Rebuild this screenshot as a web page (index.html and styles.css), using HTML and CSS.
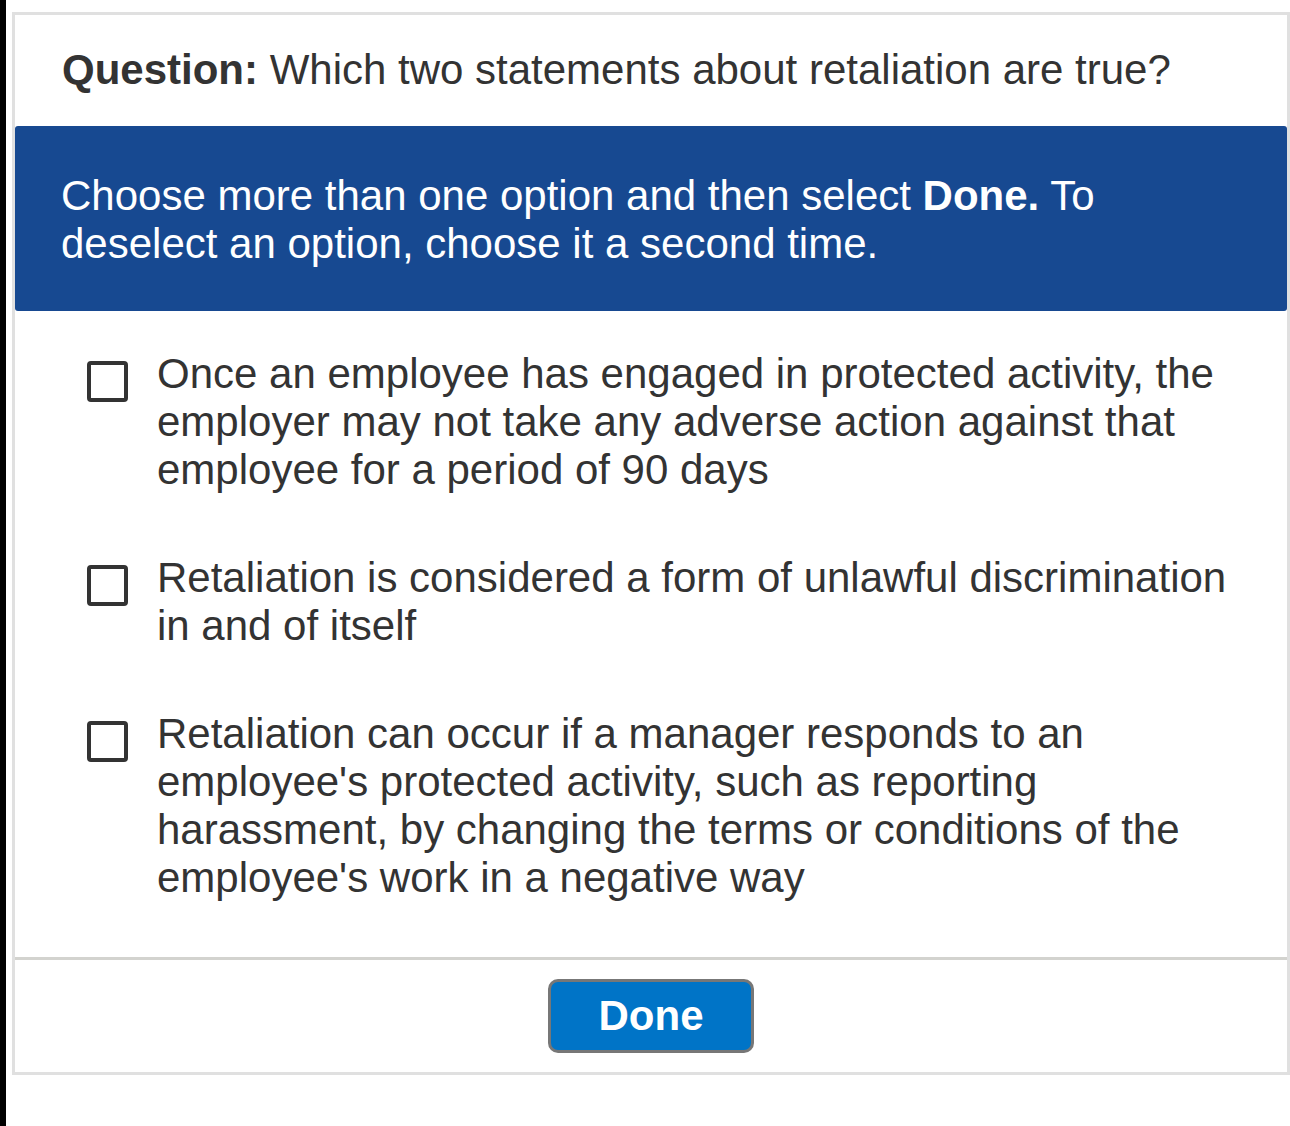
FILE: index.html
```html
<!DOCTYPE html>
<html lang="en">
<head>
  <meta charset="UTF-8">
  <meta name="viewport" content="width=device-width, initial-scale=1.0">
  <title>Question</title>
  <link rel="stylesheet" href="styles.css">
</head>
<body>
  <div class="page">
    <div class="card">
      <h1 class="question"><strong>Question:</strong> Which two statements about retaliation are true?</h1>

      <div class="instructions">
        Choose more than one option and then select <strong>Done.</strong> To deselect an option, choose it a second time.
      </div>

      <ul class="options">
        <li class="option">
          <span class="checkbox"></span>
          <span class="option-text">Once an employee has engaged in protected activity, the employer may not take any adverse action against that employee for a period of 90 days</span>
        </li>
        <li class="option">
          <span class="checkbox"></span>
          <span class="option-text">Retaliation is considered a form of unlawful discrimination in and of itself</span>
        </li>
        <li class="option">
          <span class="checkbox"></span>
          <span class="option-text">Retaliation can occur if a manager responds to an employee's protected activity, such as reporting harassment, by changing the terms or conditions of the employee's work in a negative way</span>
        </li>
      </ul>

      <div class="footer">
        <button class="button" type="button">Done</button>
      </div>
    </div>
  </div>
</body>
</html>
```

FILE: styles.css
```css
:root {
  --text: #333333;
  --blue-dark: #174991;
  --blue: #0074c7;
  --border: #e0e0e0;
  --divider: #d3d3cf;
}

* {
  margin: 0;
  padding: 0;
  box-sizing: border-box;
}

body {
  font-family: "Liberation Sans", Arial, Helvetica, sans-serif;
  background-color: white;
  color: var(--text);
}

.page {
  min-height: 100vh;
  border-left: 6px solid #000;
  padding: 12px 0 0 6px;
}

.card {
  border: 3px solid var(--border);
  background-color: white;
}

.question {
  font-size: 42px;
  font-weight: 400;
  line-height: 48px;
  padding: 31px 47px 0;
  margin-bottom: 32px;
}

.question strong {
  font-weight: 700;
}

.instructions {
  background-color: var(--blue-dark);
  color: white;
  font-size: 42px;
  line-height: 48px;
  padding: 46px 46px 43px;
  border-radius: 3px;
}

.options {
  list-style: none;
  padding: 39px 60px 55px 72px;
  border-bottom: 3px solid var(--divider);
}

.option {
  display: flex;
  align-items: flex-start;
  gap: 29px;
  font-size: 42px;
  line-height: 48px;
}

.option + .option {
  margin-top: 60px;
}

.checkbox {
  flex: none;
  width: 41px;
  height: 41px;
  margin-top: 11px;
  border: 4px solid var(--text);
  border-radius: 4px;
}

.footer {
  display: flex;
  justify-content: center;
  padding: 19px 0 19px;
}

.button {
  width: 206px;
  height: 74px;
  background-color: var(--blue);
  color: white;
  font-family: inherit;
  font-size: 42px;
  font-weight: 700;
  border: 3px solid #777777;
  border-radius: 10px;
  cursor: pointer;
}
```
